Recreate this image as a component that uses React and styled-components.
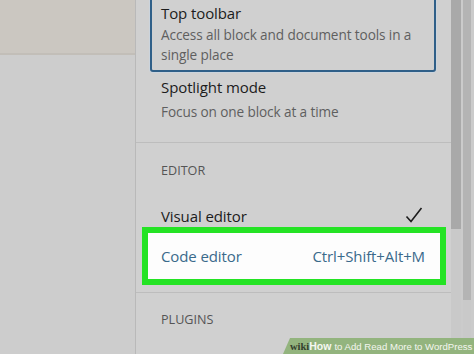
import React from "react";
import styled, { createGlobalStyle } from "styled-components";

const Global = createGlobalStyle`
  html, body { margin: 0; padding: 0; }
  body {
    width: 474px; height: 354px; overflow: hidden;
    font-family: "Open Sans", "Noto Sans", sans-serif;
    background: #cfcfcf;
  }
`;

const Screen = styled.div`
  position: relative;
  display: flex;
  width: 474px;
  height: 354px;
  overflow: hidden;
`;

const LeftPane = styled.div`
  width: 135px;
  flex: none;
  display: flex;
  flex-direction: column;
  border-right: 1px solid #b9b9b9;
  background: #cdcdcd;
`;

const TopStrip = styled.div`
  height: 53px;
  background: #cbc7c1;
  border-bottom: 2px solid #c2beb8;
`;

const Panel = styled.div`
  flex: 1;
  display: flex;
  flex-direction: column;
  background: #d0d0d0;
  min-width: 0;
`;

const Group = styled.div`
  display: flex;
  flex-direction: column;
  padding: ${(p) => p.$pad || "0"};
  border-bottom: ${(p) => (p.$divider ? "1px solid #bdbdbd" : "none")};
`;

const SelectedItem = styled.div`
  margin: -10px 15px 0 14px;
  padding: 10px 9px 5px 9px;
  border: 2px solid #2f5f88;
  border-radius: 3px;
  box-shadow: 0 0 0 1px rgba(200, 215, 230, 0.6);
`;

const Item = styled.div`
  display: flex;
  flex-direction: column;
  padding: 4px 24px 0 25px;
`;

const Title = styled.div`
  font-size: 15px;
  line-height: ${(p) => p.$lh || "22px"};
  color: #1c1c1c;
  letter-spacing: -0.1px;
  white-space: nowrap;
`;

const Desc = styled.div`
  margin-top: ${(p) => p.$mt || "1px"};
  font-size: 13.6px;
  line-height: 20px;
  color: #5f5f5f;
  letter-spacing: -0.1px;
`;

const Label = styled.div`
  padding-left: 25px;
  font-size: 12.6px;
  line-height: 16px;
  color: #555;
  text-transform: uppercase;
`;

const Row = styled.div`
  display: flex;
  align-items: center;
  justify-content: space-between;
  margin-top: ${(p) => p.$mt || "0"};
  padding: 0 28px 0 25px;
  height: 20px;
`;

const Check = styled.svg`
  width: 18px;
  height: 16px;
  display: block;
  margin-top: -2px;
`;

const HighlightRow = styled.div`
  display: flex;
  align-items: center;
  justify-content: space-between;
  margin: 1px 5px 7px 6px;
  padding: 12px 15px 12px 13px;
  background: #fdfdfd;
  border: 6px solid #24e324;
  color: #3a6a8b;
  font-size: 15px;
  line-height: 22px;
  letter-spacing: -0.1px;
  white-space: nowrap;
`;

const Scrollbars = styled.div`
  width: 23px;
  flex: none;
  display: flex;
  background: #cbcbcb;
`;

const Track = styled.div`
  width: ${(p) => p.$w}px;
  margin-left: ${(p) => p.$ml || 0}px;
  display: flex;
  flex-direction: column;
  background: #c9c9c9;
`;

const Thumb = styled.div`
  height: ${(p) => p.$h}px;
  background: ${(p) => p.$c};
`;

const Watermark = styled.div`
  position: absolute;
  right: 0;
  bottom: 0;
  width: 191px;
  height: 16px;
  background: #93b47e;
  clip-path: polygon(7px 0, 100% 0, 100% 100%, 0 100%);
  display: flex;
  align-items: center;
  padding-left: 7px;
  box-sizing: border-box;
  font-family: "Liberation Sans", Arial, sans-serif;
  font-size: 9.6px;
  color: #f3f6ef;
  white-space: nowrap;
`;

const Wiki = styled.span`
  font-family: "Liberation Serif", "DejaVu Serif", serif;
  font-weight: bold;
  color: #34402c;
  font-size: 10.5px;
`;

const How = styled.span`
  font-weight: bold;
  font-size: 10.5px;
  color: #f6f8f2;
  margin-right: 3px;
`;

export default function App() {
  return (
    <>
      <Global />
      <Screen>
        <LeftPane>
          <TopStrip />
        </LeftPane>
        <Panel>
          <Group $divider $pad="0 0 20px 0">
            <SelectedItem>
              <Title>Top toolbar</Title>
              <Desc>Access all block and document tools in a single place</Desc>
            </SelectedItem>
            <Item>
              <Title>Spotlight mode</Title>
              <Desc $mt="4px">Focus on one block at a time</Desc>
            </Item>
          </Group>
          <Group $divider $pad="20px 0 0 0">
            <Label>Editor</Label>
            <Row $mt="27px">
              <Title $lh="20px">Visual editor</Title>
              <Check viewBox="0 0 18 16">
                <path d="M1.5 9.5 L6 14.5 L16.5 1" fill="none" stroke="#1c1c1c" strokeWidth="1.6" />
              </Check>
            </Row>
            <HighlightRow>
              <span>Code editor</span>
              <span>Ctrl+Shift+Alt+M</span>
            </HighlightRow>
          </Group>
          <Group $pad="19px 0 0 0">
            <Label>Plugins</Label>
          </Group>
        </Panel>
        <Scrollbars>
          <Track $w={10}>
            <Thumb $h={229} $c="#a9a9a9" />
          </Track>
          <Track $w={8} $ml={2}>
            <Thumb $h={300} $c="#b4b4b4" />
          </Track>
        </Scrollbars>
        <Watermark>
          <Wiki>wiki</Wiki>
          <How>How</How>
          to Add Read More to WordPress
        </Watermark>
      </Screen>
    </>
  );
}
